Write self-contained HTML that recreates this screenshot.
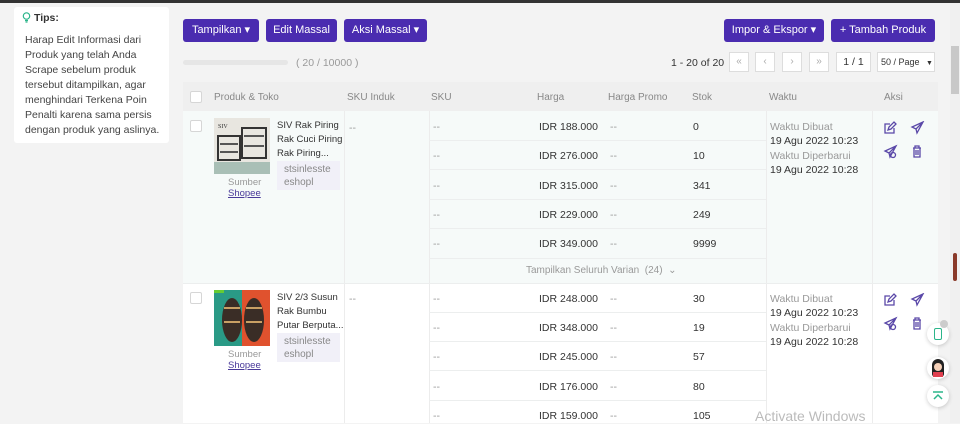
<!DOCTYPE html>
<html><head><meta charset="utf-8"><style>
*{box-sizing:border-box;margin:0;padding:0}
body{width:960px;height:423px;overflow:hidden;background:#f3f3f3;font-family:"Liberation Sans",sans-serif;font-size:10px;color:#333;position:relative}
.a{position:absolute;white-space:nowrap}
.btn{position:absolute;top:19px;height:23px;background:#4a2cb0;color:#fff;border-radius:3px;font-size:11px;line-height:23px;text-align:center}
.pg{position:absolute;top:52px;height:20px;border:1px solid #ddd;background:#fff;color:#aaa;font-size:10px;text-align:center;line-height:18px}
.hd{position:absolute;top:92px;color:#888;font-size:10px}
.t{position:absolute;font-size:10.5px;color:#333;white-space:nowrap}
.line{position:absolute;height:1px;background:#eceeee}
.vl{position:absolute;width:1px;background:#ececec}
.cb{position:absolute;width:12px;height:12px;border:1px solid #d6d6d6;background:#fff;border-radius:2px}
.g{color:#999}
</style></head><body>
<div class="a" style="left:0;top:0;width:960px;height:3px;background:#333"></div>
<div class="a" style="left:14px;top:7px;width:155px;height:136px;background:#fff;border-radius:3px"></div>
<svg class="a" style="left:22px;top:12px" width="9" height="11" viewBox="0 0 9 11"><circle cx="4.5" cy="4" r="3.2" fill="none" stroke="#2bb58a" stroke-width="1.2"/><path d="M3 8.5h3M3.5 10h2" stroke="#2bb58a" stroke-width="1.2"/></svg>
<div class="a" style="left:34px;top:12px;font-size:10.5px;color:#333;font-weight:bold">Tips:</div>
<div class="a" style="left:25px;top:33px;font-size:10.5px;line-height:15px;color:#444">Harap Edit Informasi dari<br>Produk yang telah Anda<br>Scrape sebelum produk<br>tersebut ditampilkan, agar<br>menghindari Terkena Poin<br>Penalti karena sama persis<br>dengan produk yang aslinya.</div>

<div class="btn" style="left:183px;width:76px">Tampilkan ▾</div>
<div class="btn" style="left:266px;width:71px">Edit Massal</div>
<div class="btn" style="left:344px;width:83px">Aksi Massal ▾</div>
<div class="btn" style="left:724px;width:100px">Impor &amp; Ekspor ▾</div>
<div class="btn" style="left:831px;width:104px">+ Tambah Produk</div>

<div class="a" style="left:183px;top:60px;width:105px;height:5px;background:#e6e6e6;border-radius:3px"></div>
<div class="a" style="left:296px;top:57px;color:#999;font-size:10.5px">( 20 / 10000 )</div>
<div class="a" style="left:671px;top:57px;font-size:10.5px;color:#333">1 - 20 of 20</div>
<div class="pg" style="left:729px;width:20px">«</div>
<div class="pg" style="left:755px;width:20px">‹</div>
<div class="pg" style="left:782px;width:20px">›</div>
<div class="pg" style="left:809px;width:20px">»</div>
<div class="pg" style="left:836px;width:35px;color:#333;font-size:10.5px">1 / 1</div>
<div class="pg" style="left:877px;width:58px;color:#333;font-size:9px;text-align:left;padding-left:3px">50 / Page <span style="font-size:7px;margin-left:4px">▼</span></div>

<div class="a" style="left:183px;top:82px;width:755px;height:29px;background:#efefef"></div>
<div class="cb" style="left:190px;top:91px"></div>
<div class="hd" style="left:214px">Produk &amp; Toko</div>
<div class="hd" style="left:347px">SKU Induk</div>
<div class="hd" style="left:431px">SKU</div>
<div class="hd" style="left:537px">Harga</div>
<div class="hd" style="left:608px">Harga Promo</div>
<div class="hd" style="left:692px">Stok</div>
<div class="hd" style="left:769px">Waktu</div>
<div class="hd" style="left:884px">Aksi</div>

<div class="a" style="left:183px;top:111px;width:755px;height:172px;background:#f6faf9"></div>
<div class="a" style="left:183px;top:283px;width:755px;height:140px;background:#fff"></div>
<div class="vl" style="left:344px;top:111px;height:312px"></div>
<div class="vl" style="left:429px;top:111px;height:312px"></div>
<div class="vl" style="left:766px;top:111px;height:312px"></div>
<div class="vl" style="left:872px;top:111px;height:312px"></div>
<div class="line" style="left:183px;top:283px;width:755px"></div>

<div class="cb" style="left:190px;top:120px"></div>
<svg class="a" style="left:214px;top:118px" width="56" height="56"><rect width="56" height="56" fill="#e8e6e0"/><rect x="0" y="44" width="56" height="12" fill="#a9bfb6"/><rect x="4" y="18" width="22" height="24" fill="none" stroke="#333" stroke-width="2"/><rect x="28" y="10" width="24" height="30" fill="none" stroke="#333" stroke-width="2"/><path d="M6 26h18M6 34h18M30 18h20M30 28h20" stroke="#555" stroke-width="2"/><text x="4" y="10" font-size="6" font-family="Liberation Serif" fill="#333">SIV</text></svg>
<div class="a g" style="left:228px;top:177px;font-size:9.5px">Sumber</div>
<div class="a" style="left:228px;top:188px;font-size:9.5px;color:#4a3a9a;text-decoration:underline">Shopee</div>
<div class="a" style="left:277px;top:119px;line-height:14px;font-size:9.5px">SIV Rak Piring<br>Rak Cuci Piring<br>Rak Piring...</div>
<div class="a" style="left:277px;top:161px;width:63px;height:29px;background:#f1f0f8;color:#888;font-size:10px;line-height:13px;padding:2px 0 0 7px">stsinlesste<br>eshopl</div>
<div class="t g" style="left:349px;top:122px">--</div>
<div class="t" style="left:770px;top:121px;color:#999">Waktu Dibuat</div>
<div class="t" style="left:770px;top:135px">19 Agu 2022 10:23</div>
<div class="t" style="left:770px;top:150px;color:#999">Waktu Diperbarui</div>
<div class="t" style="left:770px;top:164px">19 Agu 2022 10:28</div>

<div class="cb" style="left:190px;top:292px"></div>
<svg class="a" style="left:214px;top:290px" width="56" height="56"><rect width="28" height="56" fill="#2a9a86"/><rect x="28" width="28" height="56" fill="#e0522e"/><rect x="0" y="0" width="10" height="3" fill="#6c3"/><ellipse cx="18" cy="30" rx="10" ry="22" fill="#3a2d26"/><ellipse cx="40" cy="30" rx="10" ry="22" fill="#3a2d26"/><path d="M10 18h16M10 32h16M32 18h16M32 32h16" stroke="#c9a064" stroke-width="2"/></svg>
<div class="a g" style="left:228px;top:349px;font-size:9.5px">Sumber</div>
<div class="a" style="left:228px;top:360px;font-size:9.5px;color:#4a3a9a;text-decoration:underline">Shopee</div>
<div class="a" style="left:277px;top:291px;line-height:14px;font-size:9.5px">SIV 2/3 Susun<br>Rak Bumbu<br>Putar Berputa...</div>
<div class="a" style="left:277px;top:333px;width:63px;height:29px;background:#f1f0f8;color:#888;font-size:10px;line-height:13px;padding:2px 0 0 7px">stsinlesste<br>eshopl</div>
<div class="t g" style="left:349px;top:293px">--</div>
<div class="t" style="left:770px;top:293px;color:#999">Waktu Dibuat</div>
<div class="t" style="left:770px;top:307px">19 Agu 2022 10:23</div>
<div class="t" style="left:770px;top:322px;color:#999">Waktu Diperbarui</div>
<div class="t" style="left:770px;top:336px">19 Agu 2022 10:28</div>

<div id="v"></div>
<script>
var rows=[[121,"188.000","0"],[150,"276.000","10"],[180,"315.000","341"],[209,"229.000","249"],[238,"349.000","9999"],[293,"248.000","30"],[322,"348.000","19"],[351,"245.000","57"],[381,"176.000","80"],[410,"159.000","105"]];
var h="";
rows.forEach(function(r,i){
 h+='<div class="t g" style="left:433px;top:'+r[0]+'px">--</div><div class="t" style="left:539px;top:'+r[0]+'px">IDR '+r[1]+'</div><div class="t g" style="left:610px;top:'+r[0]+'px">--</div><div class="t" style="left:693px;top:'+r[0]+'px">'+r[2]+'</div>';
 if(i!=4&&i!=9) h+='<div class="line" style="left:429px;width:337px;top:'+(r[0]+19)+'px"></div>';
});
h+='<div class="line" style="left:429px;width:337px;top:258px"></div>';
h+='<div class="t" style="left:526px;top:265px;color:#999;font-size:10px">Tampilkan Seluruh Varian &nbsp;(24) &nbsp;⌄</div>';
document.getElementById("v").innerHTML=h;
</script>

<svg class="a" style="left:883px;top:121px" width="44" height="44" viewBox="0 0 44 44" fill="none" stroke="#5a48a8" stroke-width="1.3">
<path d="M7 3H2v9h9V7"/><path d="M5 9l1-3 5-5 2 2-5 5z"/>
<path d="M40 1L29 6l4 2 1 4z M33 8l7-7"/>
<path d="M13 25L2 30l4 2 1 4z M6 32l7-7"/><circle cx="10" cy="34" r="2.5"/>
<path d="M30 27h8M32 27v-2h4v2M31 27v9h6v-9M33 29v5M35 29v5"/>
</svg>
<svg class="a" style="left:883px;top:293px" width="44" height="44" viewBox="0 0 44 44" fill="none" stroke="#5a48a8" stroke-width="1.3">
<path d="M7 3H2v9h9V7"/><path d="M5 9l1-3 5-5 2 2-5 5z"/>
<path d="M40 1L29 6l4 2 1 4z M33 8l7-7"/>
<path d="M13 25L2 30l4 2 1 4z M6 32l7-7"/><circle cx="10" cy="34" r="2.5"/>
<path d="M30 27h8M32 27v-2h4v2M31 27v9h6v-9M33 29v5M35 29v5"/>
</svg>

<div class="a" style="left:950px;top:3px;width:10px;height:420px;background:#f0f0f0"></div>
<div class="a" style="left:951px;top:46px;width:8px;height:48px;background:#c8c8c8"></div>
<div class="a" style="left:953px;top:253px;width:4px;height:28px;background:#8a3a2a;border-radius:2px"></div>

<div class="a" style="left:927px;top:323px;width:22px;height:22px;border-radius:50%;background:#fff;box-shadow:0 1px 4px rgba(0,0,0,.2)"></div>
<div class="a" style="left:934px;top:328px;width:8px;height:12px;border:1.5px solid #2bb58a;border-radius:2px"></div>
<div class="a" style="left:940px;top:320px;width:8px;height:8px;border-radius:50%;background:#ccc"></div>
<div class="a" style="left:927px;top:357px;width:22px;height:22px;border-radius:50%;background:#fff;box-shadow:0 1px 4px rgba(0,0,0,.2)"></div>
<div class="a" style="left:932px;top:359px;width:12px;height:18px;border-radius:6px 6px 3px 3px;background:#222"></div>
<div class="a" style="left:934px;top:363px;width:8px;height:8px;border-radius:50%;background:#f5d0b8"></div>
<div class="a" style="left:933px;top:372px;width:10px;height:5px;background:#e04050"></div>
<div class="a" style="left:927px;top:385px;width:22px;height:22px;border-radius:50%;background:#fff;box-shadow:0 1px 4px rgba(0,0,0,.2)"></div>
<svg class="a" style="left:932px;top:390px" width="12" height="12" fill="none" stroke="#2bb58a" stroke-width="1.5"><path d="M1 2h10M2 9l4-4 4 4"/></svg>

<div class="a" style="left:755px;top:408px;font-size:14px;color:#bbb">Activate Windows</div>
</body></html>
